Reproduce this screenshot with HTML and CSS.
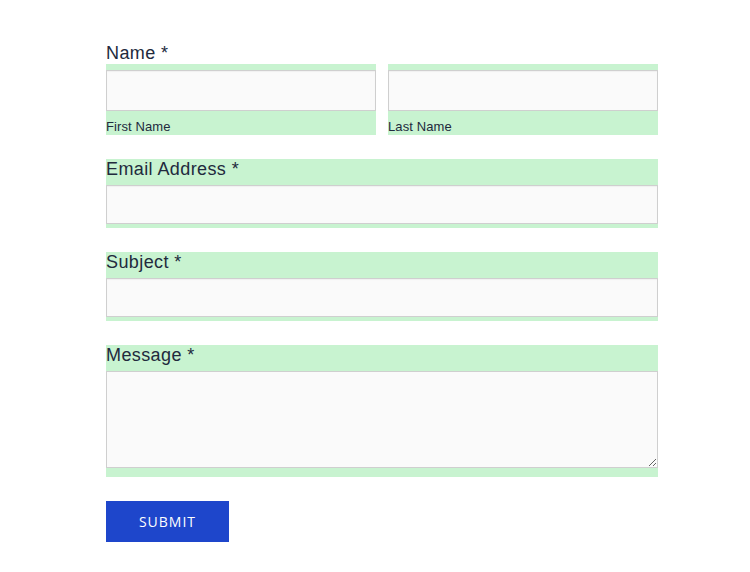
FILE: index.html
```html
<!DOCTYPE html>
<html>
<head>
<meta charset="utf-8">
<link rel="stylesheet" href="styles.css">
</head>
<body>
<form class="form">
  <fieldset class="name-set">
    <legend class="legend">Name *</legend>
    <div class="name-row">
      <div class="field sub-field">
        <input class="text-input" type="text">
        <span class="sub-label">First Name</span>
      </div>
      <div class="field sub-field">
        <input class="text-input" type="text">
        <span class="sub-label">Last Name</span>
      </div>
    </div>
  </fieldset>

  <div class="field block-field">
    <label class="label">Email Address *</label>
    <input class="text-input" type="email">
  </div>

  <div class="field block-field">
    <label class="label">Subject *</label>
    <input class="text-input" type="text">
  </div>

  <div class="field block-field message-field">
    <label class="label">Message *</label>
    <textarea class="text-area"></textarea>
  </div>

  <button class="submit" type="button">Submit</button>
</form>
</body>
</html>
```

FILE: styles.css
```css
html, body {
  margin: 0;
  padding: 0;
  background: #ffffff;
}

body {
  font-family: "Liberation Sans", Arial, Helvetica, sans-serif;
  color: #222a3d;
}

.form {
  width: 552px;
  margin: 0 0 0 106px;
  padding-top: 43px;
  display: flex;
  flex-direction: column;
}

.name-set {
  border: 0;
  margin: 0;
  padding: 0;
  min-width: 0;
}

.legend {
  padding: 0;
  font-size: 18px;
  line-height: 21px;
  letter-spacing: 0.4px;
}

.name-row {
  display: grid;
  grid-template-columns: 1fr 1fr;
  column-gap: 12px;
}

.field {
  background: #c8f3d0;
  display: flex;
  flex-direction: column;
}

.sub-field {
  padding-top: 6px;
  height: 71px;
  box-sizing: border-box;
}

.sub-label {
  font-size: 13px;
  line-height: 17px;
  margin-top: 7px;
  letter-spacing: 0.1px;
}

.block-field {
  margin-top: 24px;
  padding-bottom: 4px;
}

.label {
  font-size: 18px;
  line-height: 20px;
  letter-spacing: 0.4px;
  margin-bottom: 6px;
}

.text-input {
  display: block;
  box-sizing: border-box;
  width: 100%;
  height: 39px;
  margin: 0;
  border: 1px solid #cfcfcf;
  border-radius: 0;
  background: #fafafa;
  padding: 0 10px;
  font: inherit;
  box-shadow: inset 0 1px 1px rgba(0,0,0,0.04);
}

.sub-field .text-input {
  height: 41px;
}

.text-area {
  display: block;
  box-sizing: border-box;
  width: 100%;
  height: 97px;
  margin: 0 0 9px 0;
  border: 1px solid #cfcfcf;
  border-radius: 0;
  background: #fafafa;
  padding: 8px 10px;
  font: inherit;
  resize: vertical;
}

.message-field {
  padding-bottom: 0;
}

.submit {
  align-self: flex-start;
  margin-top: 24px;
  width: 123px;
  height: 41px;
  border: 0;
  border-radius: 0;
  background: #1e46cb;
  color: #ffffff;
  font-family: "Open Sans", "Liberation Sans", sans-serif;
  font-size: 14px;
  font-weight: 400;
  letter-spacing: 1px;
  text-transform: uppercase;
  padding: 0;
}
```
